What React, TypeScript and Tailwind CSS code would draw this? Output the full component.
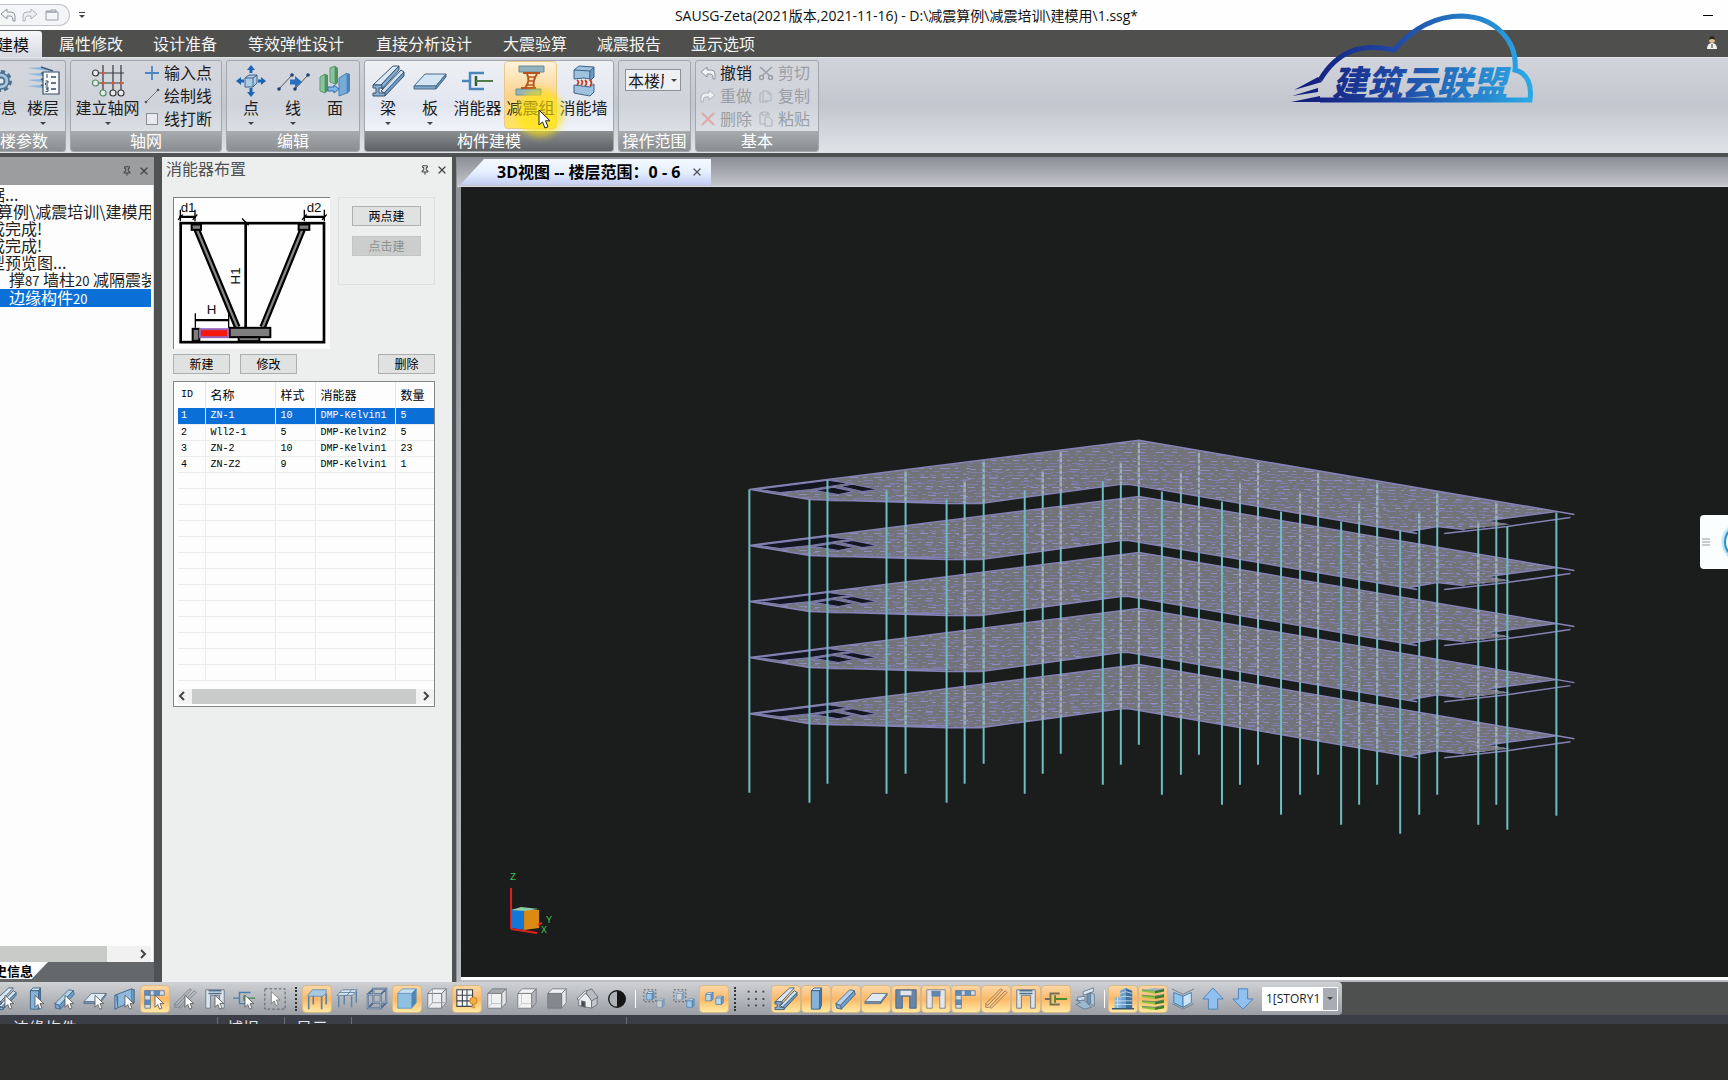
import React from 'react';
import { Pin, X } from 'lucide-react';

const BLUE = '#8fb8dc';
const EDGE = '#3f6484';

/* ---------- Ribbon icons, 32 x 32 ---------- */

const bigIcons: Record<string, React.ReactNode> = {
  gear: (
    <g fill="none" stroke="#4d7391">
      <circle cx="16" cy="16" r="9" strokeWidth="4" strokeDasharray="4 3" />
      <circle cx="16" cy="16" r="8" fill="#a9c7df" strokeWidth="1.5" />
      <circle cx="16" cy="16" r="3.5" fill="#e4e7ec" strokeWidth="2" />
    </g>
  ),
  floors: (
    <g>
      {[3, 9, 15, 21].map((y) => (
        <g key={y}>
          <path d={`M0 ${y}L14 ${y - 1}L26 ${y + 3}L14 ${y + 2}Z`} fill="#8db6dc" />
          <path d={`M14 ${y - 1}L26 ${y + 3}`} stroke="#3d5d7c" strokeWidth="1.5" />
        </g>
      ))}
      <path d="M16 7h16v22h-16z" fill="#f8fafc" stroke="#334c66" strokeWidth="1.2" />
      <path d="M24 12h5M24 18h5M24 24h5" stroke="#334c66" strokeWidth="1.6" />
      <path d="M20 9v4M18.500 16h2.500v2h-2.500v2h2.500M18.500 22h2.500v2h-2v0h2v2.500h-2.500" fill="none" stroke="#334c66" />
    </g>
  ),
  grid: (
    <g fill="none" stroke="#3a3a3a" strokeWidth="1.2">
      <path d="M11 0v25M21 0v25M29 0v25M5 8h27M5 18h27" />
      <circle cx="3.500" cy="8" r="3" fill="#e9ebef" />
      <circle cx="3.500" cy="18" r="3" fill="#e9ebef" stroke="#4f8a5c" />
      <circle cx="11" cy="28" r="3" fill="#e9ebef" stroke="#4f8a5c" />
      <circle cx="21" cy="28" r="3" fill="#e9ebef" />
      <circle cx="29" cy="28" r="3" fill="#e9ebef" />
      <g fill="#d9542b" stroke="none">
        <circle cx="11" cy="8" r="1.600" />
        <circle cx="11" cy="18" r="1.600" />
        <circle cx="21" cy="18" r="1.600" />
        <circle cx="29" cy="18" r="1.600" />
      </g>
    </g>
  ),
  point: (
    <g>
      <path d="M10 13l4-3h8v8l-4 4h-8z" fill="#a9cbe8" stroke={EDGE} />
      <path d="M10 13h8v9M18 13l4-3" fill="none" stroke={EDGE} />
      <g fill="#1f64b4">
        <path d="M16 0l4 5h-2.500v3h-3V5H12zM16 32l4-5h-2.500v-4h-3v4H12zM1 16l5-4v2.500h3v3H6V20zM31 16l-5-4v2.500h-3v3h3V20z" />
      </g>
    </g>
  ),
  line: (
    <g>
      <path d="M2 24L15 10M18 24L31 10" stroke="#555" fill="none" />
      <path d="M13 14.500h5V11l7 6-7 6v-3.500h-5z" fill="#2a6ec0" />
      <g fill="#1d3f78">
        <circle cx="2" cy="24" r="1.800" />
        <circle cx="15" cy="10" r="1.800" />
        <circle cx="18" cy="24" r="1.800" />
        <circle cx="31" cy="10" r="1.800" />
      </g>
    </g>
  ),
  face: (
    <g>
      <path d="M1 12l5-3v19l-5-2z" fill="#8ac49a" stroke="#5c9c70" />
      <path d="M6 9l3 1v16l-3 2z" fill="#4f9163" />
      <path d="M11 3l5-2v18l-5-2z" fill="#8ac49a" stroke="#5c9c70" />
      <path d="M16 1l3 2v15l-3 2z" fill="#4f9163" />
      <path d="M20 13l8-5v20l-8 3z" fill="#78abd8" stroke="#4a81b4" />
      <path d="M28 8l3 1v17l-3 3z" fill="#4c82b8" />
      <path d="M9 22h6v-2l5 4-5 4v-2H9z" fill="#7db8ea" stroke="#2f6ea8" />
    </g>
  ),
  beam: (
    <g stroke="#37536e" strokeWidth="1">
      <path d="M1 20L21 1h6L9 20z" fill="#dbe8f5" />
      <path d="M9 20L27 1v4L10 24z" fill="#86afd4" />
      <path d="M11 28L32 7v4L13 31z" fill="#6f9bc6" />
      <path d="M9 26L29 5l3 2-20 21z" fill="#cfe0f0" />
      <path d="M1 20h9v3H7v5h6v3H1v-3h3v-5H1z" fill="#8ab0d4" />
    </g>
  ),
  slab: (
    <g stroke="#4c6a86">
      <path d="M0 21L11 9h21L22 21z" fill="#d3e4f4" />
      <path d="M0 21h22v3H0z" fill="#7fa9cf" />
      <path d="M22 21L32 9v3L22 24z" fill="#5f8ebb" />
    </g>
  ),
  damper: (
    <g fill="none">
      <path d="M0 16h8M22 8H8v16h14" stroke="#4a86bd" strokeWidth="2.500" />
      <path d="M14 11v10" stroke="#355c38" strokeWidth="2.500" />
      <path d="M14 16h17" stroke="#4f7d4a" strokeWidth="2" />
    </g>
  ),
  damperSet: (
    <g>
      <path d="M4 1h25v6H4zM1 24h25v6H1z" fill="#93b2bf" stroke="#6d8c92" />
      <path d="M8 8h17M6 23h15M12 9c3 5 1 10-2 14M22 9c-3 4-4 9-3 14" fill="none" stroke="#b5541f" strokeWidth="2" />
      <path d="M13 12h8M13 16h6M12 20h7" stroke="#b5591f" strokeWidth="1.500" />
    </g>
  ),
  wall: (
    <g>
      <path d="M6 5l5-4 15 1-4 4v8l-6-1-10 1z" fill="#9fc2e0" stroke={EDGE} />
      <path d="M22 6l4-4v10l-4 4zM6 5l16 1" fill="#6d9ac4" stroke={EDGE} />
      <path d="M6 20l16 2 4-3v8l-4 4-16-3z" fill="#9fc2e0" stroke={EDGE} />
      <path d="M9 15q3 2 0 5M13 15q3 2 0 5M17 15q3 3 0 6M22 15q3 3 0 6" stroke="#c63a24" strokeWidth="1.800" fill="none" />
    </g>
  ),
};

function BigIcon({ name }: { name: string }) {
  return (
    <svg viewBox="0 0 32 32" className="size-8 shrink-0 overflow-visible" aria-hidden="true">
      {bigIcons[name]}
    </svg>
  );
}

/* ---------- Small ribbon icons, 16 x 16 ---------- */

const smallIcons: Record<string, React.ReactNode> = {
  plus: <path d="M8 1v14M1 8h14" stroke="#4a86c4" strokeWidth="1.800" />,
  diag: (
    <g>
      <path d="M2 14L14 2" stroke="#777" />
      <circle cx="2" cy="14" r="1.300" fill="#555" />
      <circle cx="14" cy="2" r="1.300" fill="#555" />
    </g>
  ),
  undo: <path d="M7 2L1 7l6 5V9h4q2 0 2 5h2V9q0-4-4-4H7z" fill="#f3f4f6" stroke="#8d949c" />,
  redo: <path d="M9 2l6 5-6 5V9H5q-2 0-2 5H1V9q0-4 4-4h4z" fill="#eceef1" stroke="#b0b5bb" />,
  del: <path d="M2 2l12 12M14 2L2 14" stroke="#e0a8a8" strokeWidth="2" />,
  cut: (
    <g fill="none" stroke="#9a9fa6" strokeWidth="1.500">
      <path d="M2 2l10 9M14 2L4 11" />
      <circle cx="3.500" cy="12.500" r="2" />
      <circle cx="12.500" cy="12.500" r="2" />
    </g>
  ),
  copy: <path d="M5 3h5l3 3v7H5zM10 3v3h3M4 5H2v9h7v-1" fill="none" stroke="#adb2b8" />,
  paste: <path d="M4 2H2v11h5M9 2h2v3M4 1h5v3H4zM7 6h4l3 3v6H7z" fill="none" stroke="#adb2b8" />,
  folder: <path d="M2 4h5v-1h5v2H2zM2 5h12v8H2z" fill="none" stroke="#999fa8" />,
};

function SmallIcon({ name }: { name: string }) {
  return (
    <svg viewBox="0 0 16 16" className="size-4 shrink-0" aria-hidden="true">
      {smallIcons[name]}
    </svg>
  );
}

/* ---------- Toolbar icons, 26 x 26 ---------- */

const pointer = <path d="M13 9v13l3-3 2 5 2.500-1-2-5h4z" fill="#fff" stroke="#555" strokeWidth="0.900" />;

const tBeam = (
  <g stroke="#37536e" strokeWidth="0.900">
    <path d="M1 16L17 1h5L8 16z" fill="#dbe8f4" />
    <path d="M9 21L25 6v3L11 24z" fill="#6f9bc6" />
    <path d="M7 20L22 4l3 2L9 22z" fill="#d6e4f1" />
    <path d="M1 16h8v2.500H6.500V22H11v2.500H1V22h2.500v-3.500H1z" fill="#8ab0d4" />
  </g>
);
const tColumn = (
  <g stroke="#3f6484">
    <path d="M8 4l3-3h8l-2 3z" fill="#cfe1f1" />
    <path d="M8 4h9v20H8z" fill="#86b3db" />
    <path d="M17 4l2-3v19l-2 4z" fill="#4d7fae" />
  </g>
);
const tBrace = (
  <g stroke="#3f6484" strokeWidth="0.900">
    <path d="M2 18L17 3l5 1L7 20z" fill="#b3d2ec" />
    <path d="M7 20L22 4l1 4L8 24z" fill="#6e9fcb" />
    <path d="M2 18l5 2 1 4-5-1z" fill="#7ba6cd" />
  </g>
);
const tSlab = (
  <g stroke="#5a6e82" strokeWidth="0.900">
    <path d="M1 16L9 7h16l-7 9z" fill="#dfe9f3" />
    <path d="M1 16h17v2H1zM18 16l7-9v2l-7 9z" fill="#7b9cba" />
  </g>
);
const tGrayBeam = (
  <g fill="none" stroke="#96785a" strokeWidth="1">
    <path d="M2 18L18 2l2 1L4 20zM6 22L23 4l2 2L8 23zM2 18v4h3" />
  </g>
);
const tPortal = (
  <g>
    <path d="M3 3h20v20h-5V9H8v14H3z" fill="#dde3e9" stroke="#68798a" />
    <path d="M6 4h14M6 7h14" stroke="#4d6f90" strokeWidth="1.500" />
  </g>
);
const tCorner = (
  <g stroke="#6d8296">
    <path d="M2 4h21v5H8v14H2z" fill="#d5dde5" />
    <path d="M2 4h6v5H2zM12 4h6v5h-6zM2 14h6v5H2z" fill="#5b8cc0" />
  </g>
);
const tCube = (front: string, top: string, side: string, stroke = '#777c83') => (
  <g stroke={stroke} strokeLinejoin="round">
    <path d="M3 7l5-5h15l-5 5z" fill={top} />
    <path d="M18 7l5-5v15l-5 6z" fill={side} />
    <path d="M3 7h15v16H3z" fill={front} />
  </g>
);
const miniCube = (x: number, y: number, fill: string) => (
  <g stroke="#4f7fab" strokeWidth="0.800">
    <path d={`M${x} ${y + 2}l2-2h6l-2 2z`} fill="#e8f2fa" />
    <path d={`M${x} ${y + 2}h6v7h-6z`} fill={fill} />
    <path d={`M${x + 6} ${y + 2}l2-2v7l-2 2z`} fill="#6c9bc8" />
  </g>
);

const toolIcons: Record<string, React.ReactNode> = {
  sBeam: <g>{tBeam}{pointer}</g>,
  sColumn: <g>{tColumn}{pointer}</g>,
  sBrace: <g>{tBrace}{pointer}</g>,
  sSlab: <g>{tSlab}{pointer}</g>,
  sWall: (
    <g>
      <path d="M2 9L20 2v14L2 24z" fill={BLUE} stroke={EDGE} />
      <path d="M20 2l3 1v14l-3-1M2 9l3 1v12" fill="#6d9ac4" stroke={EDGE} />
      {pointer}
    </g>
  ),
  sCorner: <g>{tCorner}{pointer}</g>,
  sLine: (
    <g>
      <path d="M2 18L18 2l2 1L4 20zM6 22L23 4l2 2L8 23zM2 18v4h3" fill="none" stroke="#7b828b" />
      {pointer}
    </g>
  ),
  sPortal: <g>{tPortal}{pointer}</g>,
  sDamper: (
    <g>
      <path d="M0 12h7M19 6H7v12h12" fill="none" stroke="#4780b3" strokeWidth="1.500" />
      <path d="M12 9v6M12 12h12" stroke="#3c8a4a" strokeWidth="1.500" />
      {pointer}
    </g>
  ),
  sArea: (
    <g>
      <path d="M2 2h22v22H2z" fill="none" stroke="#555b66" strokeDasharray="3 2" />
      <path d="M9 5v13l3-3 2 5 2.500-1-2-5h4z" fill="#fff" stroke="#777" strokeWidth="0.900" />
    </g>
  ),
  table: (
    <g>
      <path d="M3 9l5-6h15v4l-4 3H3z" fill="#a9c9e3" stroke="#6b93b4" />
      <path d="M4 10v14M9 10v9M18 10v14M23 7v12" stroke="#5d83a5" strokeWidth="1.800" />
    </g>
  ),
  frame: (
    <g fill="none" stroke="#5d83a5">
      <path d="M2 9l6-6h16l-5 6zM5 6h16M13 9l5-6" fill="#dce6ef" />
      <path d="M4 10v12M10 9v10M18 10v12M23 5v12" strokeWidth="1.600" />
    </g>
  ),
  wire: (
    <g fill="none" stroke="#526e8e">
      <path d="M3 8h14v15H3zM9 2h14v15H9zM3 8l6-6M17 8l6-6M3 23l6-6M17 23l6-6" strokeWidth="2.200" />
      <path d="M3 8h14v15H3zM9 2h14v15H9z" stroke="#c8d5e2" strokeWidth="0.600" />
    </g>
  ),
  solid: tCube('#8ec0e2', '#c5e0f2', '#4d83b3', '#6a9ac0'),
  hollow: (
    <g>
      {tCube('#eceef0', '#f4f5f6', '#dfe1e4')}
      <path d="M8 2v15h15M3 23l5-6" fill="none" stroke="#9a9ea4" />
    </g>
  ),
  gridBulb: (
    <g>
      <path d="M2 3h17v18H2zM8 3v18M13 3v18M2 9h17M2 15h17" fill="#f5f5f5" stroke="#3f4650" strokeWidth="1.200" />
      <circle cx="20" cy="15" r="4" fill="#f2ad3c" stroke="#c98420" />
      <path d="M18 20h4v3h-4z" fill="#d9a04a" />
    </g>
  ),
  cubeTop: (
    <g>
      {tCube('#f0f1f2', '#a7a9ad', '#e4e5e7')}
      <path d="M7 7v11h11M3 23l4-5" fill="none" stroke="#b9bcc1" />
    </g>
  ),
  cubeSide: (
    <g>
      {tCube('#f4f4f5', '#f4f4f5', '#b1b4b8')}
      <path d="M7 7v11h11M3 23l4-5" fill="none" stroke="#c5c8cc" />
    </g>
  ),
  cubeFront: tCube('#85888d', '#f1f2f3', '#e6e7e9'),
  house: (
    <g stroke="#6b7077" strokeLinejoin="round">
      <path d="M4 13l7-7 7 8v9L4 20z" fill="#eceef0" />
      <path d="M18 14l6-3v8l-6 4z" fill="#c5c8cd" />
      <path d="M11 5l7-3 7 9-7 4z" fill="#b9bdc3" />
      <path d="M2 13l9-9 2 1-9 9z" fill="#f1f2f3" />
      <path d="M7 15l4 1v6l-4-1z" fill="#474b52" />
    </g>
  ),
  contrast: (
    <g>
      <circle cx="13" cy="13" r="9" fill="#aeb1b6" stroke="#1d1d1d" strokeWidth="1.500" />
      <path d="M13 4a9 9 0 0 1 0 18z" fill="#151515" />
    </g>
  ),
  selA: (
    <g>
      <path d="M2 3h13v13H2z" fill="none" stroke="#555" strokeDasharray="2 2" />
      {miniCube(5, 5, '#9cc6ea')}
      <g opacity="0.6">{miniCube(16, 13, '#dfe2e6')}</g>
    </g>
  ),
  selB: (
    <g>
      <path d="M2 3h13v13H2z" fill="none" stroke="#555" strokeDasharray="2 2" />
      <g opacity="0.6">{miniCube(5, 5, '#dfe2e6')}</g>
      {miniCube(16, 13, '#9cc6ea')}
    </g>
  ),
  selC: <g>{miniCube(4, 6, '#b9d8ef')}{miniCube(15, 10, '#b9d8ef')}</g>,
  dots: (
    <g fill="#3e434b">
      {[5, 13, 21].map((x) => [5, 13, 20].map((y) => <rect key={`${x}-${y}`} x={x - 1} y={y - 1} width="2" height="2" />))}
    </g>
  ),
  beam: tBeam,
  column: tColumn,
  brace: tBrace,
  slab: tSlab,
  portalBlue: (
    <g>
      <path d="M2 3h22v20h-7V10H9v13H2z" fill="#6787a8" stroke="#4b6582" />
      <path d="M7 4h12v5H7z" fill="#e3e6ea" />
    </g>
  ),
  portalTop: (
    <g>
      <path d="M3 3h20v20h-6V10H9v13H3z" fill="#e4e6e9" stroke="#82878e" />
      <path d="M8 4h10v6H8z" fill="#6287ad" />
    </g>
  ),
  corner: tCorner,
  grayBeam: tGrayBeam,
  portal: tPortal,
  damper: (
    <g>
      <path d="M1 13h6M17 7H7v12h10" fill="none" stroke="#76705a" strokeWidth="2" />
      <path d="M12 9v8M12 13h13" stroke="#4a8a30" strokeWidth="2" />
    </g>
  ),
  iso: (
    <g stroke="#5b7690" strokeWidth="0.900">
      <path d="M10 5l11-4v4l-11 4z" fill="#dfe6ed" />
      <path d="M14 8l4-2v12l-4 2z" fill="#6f94b6" />
      <path d="M18 6l4 2v13l-4-3z" fill="#b5cadd" />
      <path d="M2 14h9l8 8-8 2-9-5 5-2z" fill="#9db8d1" />
      <path d="M4 11l8-1v4l-8 1z" fill="#cfdce8" />
    </g>
  ),
  building: (
    <g>
      <path d="M10 4l6-3v22h-6z" fill="#6ba0cf" />
      <path d="M16 1l7 3v19h-7z" fill="#3f6f9f" />
      <path d="M4 11h7v12H4z" fill="#86b5dd" />
      <path d="M10 7l6-2 7 2M10 11l6-1 7 1M10 15h13M10 19h13M4 15h6M4 19h6M7 11v12" fill="none" stroke="#cfe3f3" strokeWidth="0.900" />
      <path d="M1 23.500h24" stroke="#35597c" strokeWidth="1.500" />
    </g>
  ),
  storeys: (
    <g>
      {[3, 9, 15, 21].map((y) => (
        <g key={y}>
          <path d={`M1 ${y}l14 1v3l-14-2z`} fill="#8cc63f" />
          <path d={`M15 ${y + 1}l10-2v3l-10 2z`} fill="#3c7a2c" />
          <path d={`M1 ${y}l14 1 10-2`} fill="none" stroke="#5d7f6c" strokeWidth="0.900" />
        </g>
      ))}
      <path d="M1 3l14-2 10 1-10 2z" fill="#9db6c6" />
    </g>
  ),
  planes: (
    <g>
      <path d="M1 2l12 6 12-6M1 18l12 6 12-6" fill="none" stroke="#777e86" />
      <path d="M3 6l10 4v12L3 17z" fill="#8fc4ec" stroke="#3b7cb4" />
      <path d="M13 10l9-4v11l-9 5z" fill="#cfe5f6" stroke="#3b7cb4" />
    </g>
  ),
  up: <path d="M13 1L24 13h-6v11H8V13H2z" fill="#8fc0f0" stroke="#4a7fb8" />,
  down: <path d="M13 24L2 13h6V2h10v11h6z" fill="#8fc0f0" stroke="#4a7fb8" />,
};

function Tool({ name, active = false }: { name: string; active?: boolean }) {
  return (
    <button
      type="button"
      aria-label={name}
      aria-pressed={active}
      className={
        active
          ? 'flex h-7 w-[30px] shrink-0 items-center justify-center rounded-sm border border-[#d9b98a] bg-linear-to-b from-[#fbd7a5] via-[#fbb968] to-[#ffe9a0]'
          : 'flex h-7 w-[30px] shrink-0 items-center justify-center'
      }
    >
      <svg viewBox="0 0 26 26" className="size-6 shrink-0 overflow-visible" aria-hidden="true">
        {toolIcons[name]}
      </svg>
    </button>
  );
}

const Grip = () => (
  <span className="flex w-3 shrink-0 justify-center">
    <span className="h-6 border-l-2 border-dotted border-[#2f3237]" />
  </span>
);

/* ---------- Ribbon parts ---------- */

function Group({ title, hot = false, className, titleClass = 'text-center', children }: { title: string; hot?: boolean; className: string; titleClass?: string; children: React.ReactNode }) {
  return (
    <section
      className={`flex h-[92px] shrink-0 flex-col overflow-hidden rounded-[3px] border border-[#a3a6aa] ${
        hot
          ? 'bg-linear-to-b from-[#eef0f4] via-[#e2e6f0] to-[#fbfdff]'
          : 'bg-linear-to-b from-[#d4d6dc] via-[#cfd3db] to-[#e6ebec]'
      } ${className}`}
    >
      <div className="flex flex-1 items-start">{children}</div>
      <h2
        className={`h-5 text-base leading-[19px] whitespace-nowrap text-white ${titleClass} ${
          hot ? 'bg-linear-to-b from-[#8d9093] to-[#5e6264]' : 'bg-linear-to-b from-[#a9acaf] to-[#8b8e91]'
        }`}
      >
        {title}
      </h2>
    </section>
  );
}

const Caret = ({ className = '' }: { className?: string }) => (
  <span className={`border-x-[3px] border-t-[3px] border-x-transparent border-t-[#444] ${className}`} />
);

function Big({ icon, label, caret = false, className, hot = false }: { icon: string; label: string; caret?: boolean; className: string; hot?: boolean }) {
  return (
    <button
      type="button"
      className={`flex h-[68px] shrink-0 flex-col items-center pt-[3px] text-base leading-[21px] whitespace-nowrap text-[#1d1d1d] ${
        hot ? 'rounded-sm border border-[#e7c98b] bg-linear-to-b from-[#fdf3dc] via-[#fbd28b] to-[#ffe45e]' : 'border border-transparent'
      } ${className}`}
    >
      <BigIcon name={icon} />
      <span>{label}</span>
      {caret && <Caret className="mt-1" />}
    </button>
  );
}

function Small({ icon, label, off = false }: { icon: string; label: string; off?: boolean }) {
  return (
    <button
      type="button"
      disabled={off}
      className={`flex h-[23px] items-center gap-1 text-base leading-[23px] whitespace-nowrap ${off ? 'text-[#9a9da3]' : 'text-[#1d1d1d]'}`}
    >
      <SmallIcon name={icon} />
      {label}
    </button>
  );
}

function Ribbon() {
  return (
    <div className="flex items-start gap-1 border-t border-[#e4e5ea] bg-linear-to-b from-[#d2d4db] via-[#c2c6ce] to-[#e0e4e8] pt-0.5 pb-px">
      <Group title="楼参数" titleClass="text-left" className="w-[66px] rounded-l-none border-l-0">
        <Big icon="gear" label="信息" className="-ml-[17px] w-9" />
        <Big icon="floors" label="楼层" caret className="ml-1.5 w-9" />
      </Group>
      <Group title="轴网" className="w-[152px]">
        <Big icon="grid" label="建立轴网" caret className="w-[73px]" />
        <div className="flex flex-col">
          <Small icon="plus" label="输入点" />
          <Small icon="diag" label="绘制线" />
          <label className="flex h-[23px] items-center gap-1 text-base leading-[23px] whitespace-nowrap text-[#1d1d1d]">
            <input type="checkbox" className="m-0.5 size-3 appearance-none border border-[#8b8f96] bg-[#e9eaee]" />
            线打断
          </label>
        </div>
      </Group>
      <Group title="编辑" className="w-[134px]">
        <Big icon="point" label="点" caret className="ml-[3px] w-[42px]" />
        <Big icon="line" label="线" caret className="w-[42px]" />
        <Big icon="face" label="面" className="w-[42px]" />
      </Group>
      <Group title="构件建模" hot className="w-[250px]">
        <Big icon="beam" label="梁" caret className="ml-0.5 w-[42px]" />
        <Big icon="slab" label="板" caret className="w-[42px]" />
        <Big icon="damper" label="消能器" className="w-[53px]" />
        <div className="relative">
          <Big icon="damperSet" label="减震组" hot className="w-[53px]" />
          <span className="absolute top-7 left-3 size-12 rounded-full bg-[#ffe600] opacity-60 blur-[3px]" />
          <svg viewBox="0 0 14 20" className="absolute top-12 left-[34px] z-10 h-5 w-3.5" aria-hidden="true">
            <path d="M1 1v15l3.500-3 2.500 6 3-1.200-2.500-6H12z" fill="#fff" stroke="#222" />
          </svg>
        </div>
        <Big icon="wall" label="消能墙" className="w-[53px]" />
      </Group>
      <Group title="操作范围" className="w-[73px]">
        <span className="relative mt-2 ml-1.5 flex items-center">
          <select
            aria-label="操作范围"
            className="h-[22px] w-14 appearance-none border border-[#8f9399] bg-[#eef0f3] pr-4 pl-0.5 text-base leading-5 text-[#1d1d1d]"
          >
            <option>本楼层</option>
          </select>
          <Caret className="pointer-events-none absolute right-1" />
        </span>
      </Group>
      <Group title="基本" className="w-[124px]">
        <div className="flex gap-1.5 pl-1">
          <div className="flex flex-col">
            <Small icon="undo" label="撤销" />
            <Small icon="redo" label="重做" off />
            <Small icon="del" label="删除" off />
          </div>
          <div className="flex flex-col">
            <Small icon="cut" label="剪切" off />
            <Small icon="copy" label="复制" off />
            <Small icon="paste" label="粘贴" off />
          </div>
        </div>
      </Group>
    </div>
  );
}

/* ---------- Title, logo and tabs ---------- */

function CloudLogo() {
  return (
    <svg viewBox="1290 12 244 94" className="absolute top-3 right-[194px] z-20 h-[94px] w-[244px]" role="img" aria-label="建筑云联盟">
      <defs>
        <linearGradient id="cloud" gradientUnits="userSpaceOnUse" x1="1310" y1="0" x2="1530" y2="0">
          <stop offset="0" stopColor="#14207e" />
          <stop offset="0.400" stopColor="#1f4ba6" />
          <stop offset="1" stopColor="#2ba9e6" />
        </linearGradient>
      </defs>
      <path
        d="M1320 80C1338 50 1362 43 1394 50C1420 20 1446 16 1462 16C1496 17 1518 42 1515 70C1528 73 1532 86 1530 100H1320"
        fill="none"
        stroke="url(#cloud)"
        strokeWidth="5"
      />
      <path d="M1294 90L1318 77L1322 82ZM1292 96L1318 88V92ZM1291 102L1320 96V102Z" fill="url(#cloud)" />
      <text x="1332" y="96" fontSize="35" fontWeight="900" fontStyle="italic" fill="url(#cloud)" className="font-['Noto_Sans_CJK_SC',sans-serif]">
        建筑云联盟
      </text>
    </svg>
  );
}

function TitleBar() {
  return (
    <header className="flex h-[30px] items-center bg-[#fdfefd]">
      <div className="flex h-[22px] w-[70px] items-center gap-1.5 rounded-r-full border border-l-0 border-[#c2c5ca] bg-[#f4f5f6]">
        <button type="button" aria-label="撤销"><SmallIcon name="undo" /></button>
        <button type="button" aria-label="重做"><SmallIcon name="redo" /></button>
        <button type="button" aria-label="打开"><SmallIcon name="folder" /></button>
      </div>
      <button type="button" aria-label="自定义" className="ml-2 flex w-2 flex-col items-center gap-0.5">
        <span className="h-px w-1.5 bg-[#444]" />
        <Caret />
      </button>
      <h1 className="flex-1 pt-0.5 pl-6 text-center font-['Open_Sans','Noto_Sans_CJK_SC',sans-serif] text-sm leading-7 text-[#111]">
        SAUSG-Zeta(2021版本,2021-11-16) - D:\减震算例\减震培训\建模用\1.ssg*
      </h1>
      <button type="button" aria-label="最小化" className="mr-[15px] flex h-6 items-center">
        <span className="h-px w-2.5 bg-black" />
      </button>
    </header>
  );
}

const tabs = ['属性修改', '设计准备', '等效弹性设计', '直接分析设计', '大震验算', '减震报告', '显示选项'];

function TabBar() {
  return (
    <nav className="flex h-[27px] items-end bg-[#4f504e] text-base leading-[27px] whitespace-nowrap text-[#f4f4f4]">
      <button type="button" className="mr-0.5 h-[26px] w-[42px] overflow-hidden rounded-tr-[3px] bg-linear-to-b from-[#f6f7fa] to-[#d6d9e0] text-left leading-[26px] text-[#111]">
        <span className="-ml-[3px]">建模</span>
      </button>
      {tabs.map((t) => (
        <button key={t} type="button" className={t.length > 4 ? 'px-4' : 'px-[15px]'}>
          {t}
        </button>
      ))}
      <svg viewBox="0 0 12 14" className="mr-2.5 mb-[7px] ml-auto h-3.5 w-3" aria-label="用户">
        <circle cx="6" cy="4" r="3" fill="#d8bf8c" />
        <path d="M3 4q0-4 3-4t3 4q-3-2-6 0z" fill="#2c2620" />
        <path d="M1 13q0-6 5-6t5 6z" fill="#f4f4f4" />
        <path d="M6 8v4" stroke="#333" />
      </svg>
    </nav>
  );
}

/* ---------- Left dock ---------- */

const PaneTools = () => (
  <span className="flex items-center gap-1.5 text-[#444]">
    <button type="button" aria-label="固定"><Pin className="size-2.5" strokeWidth={2.5} /></button>
    <button type="button" aria-label="关闭"><X className="size-3" strokeWidth={2.5} /></button>
  </span>
);

function LogPane() {
  return (
    <aside className="flex w-[154px] shrink-0 flex-col overflow-hidden bg-[#65686a]">
      <div className="flex h-7 shrink-0 items-center justify-end bg-[#9c9d9e] pr-1">
        <PaneTools />
      </div>
      <div className="flex flex-1 flex-col border-r border-[#d9dbdb] bg-[#fcfdfc] pt-px pr-0.5">
        <ul className="flex-1 overflow-hidden text-base leading-[17px] whitespace-nowrap text-[#222]">
          <li className="-ml-[11px]">据...</li>
          <li className="-ml-[3px]">算例\减震培训\建模用</li>
          <li className="-ml-[11px]">成完成!</li>
          <li className="-ml-[11px]">成完成!</li>
          <li className="-ml-[11px]">型预览图...</li>
          <li className="pl-[9px]">撑<span className="text-[13px]">87</span> 墙柱<span className="text-[13px]">20</span> 减隔震装</li>
          <li className="bg-[#0a6fd6] pl-[9px] text-white">边缘构件<span className="text-[13px]">20</span></li>
        </ul>
        <div className="flex h-4 items-center bg-[#f0f1f0]">
          <span className="h-full w-[107px] bg-[#c9cbc9]" />
          <span className="ml-auto pr-1">
            <svg viewBox="0 0 8 10" className="h-2.5 w-2" aria-hidden="true"><path d="M2 1l4 4-4 4" fill="none" stroke="#444" strokeWidth="2" /></svg>
          </span>
        </div>
      </div>
      <div className="flex h-5 shrink-0 items-start">
        <button type="button" className="h-[17px] w-12 overflow-hidden bg-[#fcfdfc] text-left text-[13px] leading-[17px] font-bold whitespace-nowrap text-black [clip-path:polygon(0_0,100%_0,66%_100%,0_100%)]">
          <span className="-ml-[6px]">史信息</span>
        </button>
      </div>
    </aside>
  );
}

/* ---------- Damper pane ---------- */

function DamperSketch() {
  return (
    <div className="h-[152px] w-[157px] border-t border-l border-[#7d7f7f] bg-[#fdfefd]">
      <svg viewBox="524 145 468 452" className="size-full" aria-hidden="true">
        <g fill="none" stroke="#000">
          <rect x="544" y="220" width="430" height="357" strokeWidth="8" />
          <path d="M739 216V540" strokeWidth="8" />
          <path d="M540 201H588M914 201H976M588 511H688" strokeWidth="7" />
          <path d="M543 180V214M587 180V214M915 180V214M975 180V214M588 490V534M688 488V534" strokeWidth="4" />
          <path d="M536 210l14-16M580 210l14-16M908 210l14-16M968 210l14-16M728 206l20 20M736 530l14 14" strokeWidth="4" />
        </g>
        <path d="M592 238L714 532M910 238L790 532" stroke="#000" strokeWidth="20" />
        <path d="M592 238L714 532M910 238L790 532" stroke="#858585" strokeWidth="7" />
        <g fill="#7e7e7e" stroke="#000" strokeWidth="6">
          <rect x="577" y="224" width="28" height="16" />
          <rect x="898" y="224" width="32" height="16" />
          <rect x="691" y="534" width="122" height="28" />
          <rect x="718" y="562" width="62" height="12" />
          <rect x="580" y="537" width="20" height="36" />
        </g>
        <rect x="602" y="538" width="84" height="24" fill="#f5180c" stroke="#9a63b8" strokeWidth="6" />
        <g fill="#111" fontSize="40" className="font-['Liberation_Sans',sans-serif]">
          <text x="544" y="186">d1</text>
          <text x="922" y="186">d2</text>
          <text x="622" y="494">H</text>
          <text transform="translate(722 404) rotate(-90)">H1</text>
        </g>
      </svg>
    </div>
  );
}

const rows = [
  ['1', 'ZN-1', '10', 'DMP-Kelvin1', '5'],
  ['2', 'Wll2-1', '5', 'DMP-Kelvin2', '5'],
  ['3', 'ZN-2', '10', 'DMP-Kelvin1', '23'],
  ['4', 'ZN-Z2', '9', 'DMP-Kelvin1', '1'],
];
const blankRows = Array.from({ length: 13 }, () => ['', '', '', '', '']);

const PushButton = ({ label, className, off = false }: { label: string; className: string; off?: boolean }) => (
  <button
    type="button"
    disabled={off}
    className={`h-5 border text-xs leading-[18px] ${off ? 'border-[#c4c6c5] bg-[#cccecd] text-[#8f9190]' : 'border-[#adb0af] bg-[#e0e2e1] text-black'} ${className}`}
  >
    {label}
  </button>
);

function DamperPane() {
  return (
    <aside className="flex w-[290px] shrink-0 flex-col bg-[#edefee]">
      <div className="flex h-7 items-start justify-between pr-1 pl-1">
        <h2 className="text-base leading-[22px] text-[#505254]">消能器布置</h2>
        <span className="pt-[7px]"><PaneTools /></span>
      </div>
      <div className="flex flex-col pt-3 pr-[17px] pl-[11px]">
        <div className="flex items-start gap-2">
          <DamperSketch />
          <div className="flex h-[88px] flex-1 flex-col items-center gap-2.5 border border-[#dfe1e0] pt-2">
            <PushButton label="两点建" className="w-[69px]" />
            <PushButton label="点击建" className="w-[69px]" off />
          </div>
        </div>
        <div className="mt-[5px] flex gap-2.5">
          <PushButton label="新建" className="w-[57px]" />
          <PushButton label="修改" className="w-[57px]" />
          <PushButton label="删除" className="ml-auto w-[57px]" />
        </div>
        <div className="mt-[7px] border border-[#828584] bg-[#fcfdfc] pl-1">
          <table className="w-full table-fixed border-collapse text-left">
            <colgroup>
              <col className="w-[27px]" />
              <col className="w-[70px]" />
              <col className="w-10" />
              <col className="w-20" />
              <col />
            </colgroup>
            <thead>
              <tr className="h-[26px] text-xs text-black">
                {['ID', '名称', '样式', '消能器', '数量'].map((h, i) => (
                  <th key={h} scope="col" className={`border-r border-[#e4e6e5] p-0 font-normal whitespace-nowrap last:border-r-0 ${i ? 'pl-[5px]' : "pl-[3px] font-['Liberation_Mono',monospace] text-[10px]"}`}>
                    {h}
                  </th>
                ))}
              </tr>
            </thead>
            <tbody className="font-['Liberation_Mono',monospace] text-[10px] leading-[15px]">
              {[...rows, ...blankRows].map((r, n) => (
                <tr key={n} className={n === 0 ? 'h-4 bg-[#0a6fd6] text-white' : 'h-4 text-black'}>
                  {r.map((c, i) => (
                    <td key={i} className={`border-r border-b border-[#ebedec] p-0 whitespace-nowrap last:border-r-0 ${i ? 'pl-[5px]' : 'pl-[3px]'}`}>
                      {c}
                    </td>
                  ))}
                </tr>
              ))}
            </tbody>
          </table>
          <div className="mt-2 mb-0.5 flex h-[15px] items-center bg-[#f2f3f2]">
            <svg viewBox="0 0 8 10" className="mr-1.5 h-2.5 w-2" aria-hidden="true"><path d="M6 1L2 5l4 4" fill="none" stroke="#444" strokeWidth="2" /></svg>
            <span className="h-full flex-1 bg-[#c9cbca]" />
            <svg viewBox="0 0 8 10" className="mr-1 ml-1.5 h-2.5 w-2" aria-hidden="true"><path d="M2 1l4 4-4 4" fill="none" stroke="#444" strokeWidth="2" /></svg>
          </div>
        </div>
      </div>
    </aside>
  );
}

/* ---------- 3D model ---------- */

const STOREY = 56;
const COLUMN = 303;
const backColumns = [
  [905, 470], [983, 460], [964, 480], [1060, 450], [1042, 470], [1138, 441], [1120, 461],
  [1198, 451], [1180, 471], [1239, 481], [1257, 461], [1299, 491], [1317, 471], [1358, 501],
  [1376, 481], [1418, 511], [1436, 491], [1477, 521], [1495, 501],
];
const frontColumns = [
  [749, 489], [809, 499], [827, 480], [886, 490], [946, 499], [1024, 490], [1102, 481],
  [1161, 491], [1221, 501], [1280, 511], [1340, 521], [1399, 530], [1506, 526], [1555, 512],
];
const slab =
  'M749 489L1138 440L1144 441L1555 511L1487 520L1509 524L1463 529L1436 526L1408 531L1398 530L1128 484L1120 484L980 503L946 502L809 499Z';
const openings = 'M757 489L828 480L848 483L810 489L780 492ZM840 486L852 484L877 489L862 491ZM814 490L833 487L853 491L838 494Z';

const texture = Array.from({ length: 34 }, (_, i) => i * 3);
const dashes = ['7 6 3 5', '4 7 8 4', '10 5 3 8', '3 9 6 4', '8 8 5 11'];

function Model() {
  return (
    <svg viewBox="461 187 1267 789" preserveAspectRatio="xMinYMin slice" className="absolute inset-0 size-full" aria-label="3D视图" role="img">
      <defs>
        <clipPath id="slabClip"><path d={slab} /></clipPath>
        <g id="storey">
          <path d={slab} fill="#737479" />
          <g clipPath="url(#slabClip)" fill="none" shapeRendering="crispEdges">
            {texture.map((d, i) => (
              <path
                key={d}
                d={`M740 ${440 + d}L1570 ${446 + d}`}
                stroke={i % 3 ? '#7f7db0' : '#8d8dc0'}
                strokeDasharray={dashes[(i * 3) % 5]}
                strokeDashoffset={(i * i * 7) % 31}
              />
            ))}
            {texture.map((d, i) => (
              <path
                key={d}
                d={`M740 ${490 + d * 2}L1138 ${460 + d * 2}L1570 ${506 + d * 2}`}
                stroke="#807ead"
                strokeDasharray={dashes[(i * 2) % 5]}
                strokeDashoffset={(i * i * 11) % 37}
              />
            ))}
          </g>
          <path d={openings} fill="#14151f" stroke="#7c7ab0" />
          <path
            d="M749 489L1138 440L1144 441L1573 514M749 489L809 499L946 503L980 503L1120 484L1128 484L1398 530L1416 533M827 500L946 501M1569 517L1506 526L1443 533M1408 531L1436 526L1463 529M1555 511L1487 520"
            fill="none"
            stroke="#8582b6"
            strokeWidth="1.500"
          />
        </g>
      </defs>
      {[0, 1, 2, 3, 4].map((n) => (
        <use key={n} href="#storey" y={n * STOREY} />
      ))}
      <g stroke="#6cbcc2" strokeWidth="2">
        {[...backColumns, ...frontColumns].map(([x, y]) => (
          <path key={`${x}-${y}`} d={`M${x} ${y}v${COLUMN}`} />
        ))}
      </g>
      {[0, 1, 2, 3, 4].map((n) => (
        <g key={n} transform={`translate(0 ${n * STOREY})`}>
          <g clipPath="url(#slabClip)">
            {backColumns.map(([x, y]) => {
              const top = Math.max(440, y - n * STOREY);
              return (
                <g key={x} strokeWidth="2">
                  <path d={`M${x} ${top}V540`} stroke="#9fb0b8" />
                  <path d={`M${x} ${top}V540`} stroke="#7d7d90" strokeDasharray="2 5 1 4" />
                </g>
              );
            })}
          </g>
        </g>
      ))}
      <g>
        <path d="M511 887V928" stroke="#e02020" strokeWidth="2" />
        <path d="M511 909h13v20l-13-2z" fill="#1277d8" />
        <path d="M524 909h15v18l-15 2z" fill="#dc8a12" />
        <path d="M511 909l10-3 18 2-15 2z" fill="#8fc9a6" />
        <path d="M511 928l26 4M538 924l4-2" stroke="#e02020" strokeWidth="2" />
        <g fill="#3fc452" fontSize="10" className="font-['Liberation_Mono',monospace]">
          <text x="510" y="879">Z</text>
          <text x="546" y="922">Y</text>
          <text x="541" y="932">X</text>
        </g>
      </g>
    </svg>
  );
}

function View3D() {
  return (
    <main className="flex min-w-0 flex-1 flex-col border-l border-[#8d9096] bg-linear-to-b from-[#8e9197] to-[#b9bcc2]">
      <div className="flex h-[30px] shrink-0 items-start border-b border-[#d9dbe0] bg-linear-to-b from-[#8b8e94] to-[#c3c5cb] pt-0.5 pl-[3px]">
        <div className="flex h-[26px] w-[251px] items-center bg-linear-to-b from-[#f4faff] via-[#e6efff] to-[#c3cdf2] pl-[37px] [clip-path:polygon(0_100%,24px_0,100%_0,100%_100%)]">
          <button type="button" className="font-['Open_Sans','Noto_Sans_CJK_SC',sans-serif] text-base leading-[22px] font-bold whitespace-pre text-black">3D视图 -- 楼层范围：0 - 6</button>
          <button type="button" aria-label="关闭视图" className="ml-auto pr-2 text-[#555]"><X className="size-3" strokeWidth={2.500} /></button>
        </div>
      </div>
      <div className="relative mb-0.5 ml-1 flex-1 overflow-hidden border-b-[3px] border-white bg-[#1a1d1b]">
        <Model />
      </div>
    </main>
  );
}

/* ---------- Bottom ---------- */

function BottomToolbar() {
  return (
    <div className="flex h-[33px] shrink-0 overflow-hidden bg-[#4e504f]">
      <div className="flex items-center overflow-hidden rounded-r-sm bg-linear-to-b from-[#cfd1d4] to-[#9b9ea5] pr-1">
        <span className="-ml-[10px] flex">
          {['sBeam', 'sColumn', 'sBrace', 'sSlab', 'sWall'].map((n) => <Tool key={n} name={n} />)}
          <Tool name="sCorner" active />
          {['sLine', 'sPortal', 'sDamper', 'sArea'].map((n) => <Tool key={n} name={n} />)}
        </span>
        <Grip />
        <Tool name="table" active />
        <Tool name="frame" />
        <Tool name="wire" />
        <Tool name="solid" active />
        <Tool name="hollow" />
        <Tool name="gridBulb" active />
        {['cubeTop', 'cubeSide', 'cubeFront', 'house', 'contrast'].map((n) => <Tool key={n} name={n} />)}
        <span className="mx-[3px] h-[18px] w-px shrink-0 bg-white" />
        <Tool name="selA" />
        <Tool name="selB" />
        <Tool name="selC" active />
        <Grip />
        <Tool name="dots" />
        {['beam', 'column', 'brace', 'slab', 'portalBlue', 'portalTop', 'corner', 'grayBeam', 'portal', 'damper'].map((n) => (
          <Tool key={n} name={n} active />
        ))}
        <Tool name="iso" />
        <span className="mx-[3px] h-[18px] w-px shrink-0 bg-white" />
        <Tool name="building" active />
        <Tool name="storeys" active />
        {['planes', 'up', 'down'].map((n) => <Tool key={n} name={n} />)}
        <span className="relative ml-1 flex items-center">
          <select
            aria-label="楼层"
            className="h-6 w-[76px] appearance-none border border-white bg-white pr-[15px] pl-[3px] font-['Open_Sans',sans-serif] text-xs leading-5 text-[#1d1d1d]"
          >
            <option>1[STORY1</option>
          </select>
          <span className="pointer-events-none absolute right-px flex h-[22px] w-3.5 items-center justify-center bg-[#a9acb3]">
            <Caret />
          </span>
        </span>
      </div>
    </div>
  );
}

function StatusBar() {
  return (
    <footer className="flex h-[9px] shrink-0 overflow-hidden bg-[#3b3d47] pt-0.5 text-base leading-5 whitespace-nowrap text-[#e4e4e6]">
      <span className="w-[218px] border-r border-[#6c6e76] pl-[13px]">边缘构件</span>
      <span className="w-[67px] border-r border-[#6c6e76] pl-[9px]">捕捉</span>
      <span className="w-[67px] border-r border-[#6c6e76] pl-[11px]">显示</span>
      <span className="w-[275px] border-r border-[#6c6e76]" />
    </footer>
  );
}

export default function App() {
  return (
    <div className="relative flex min-h-screen flex-col overflow-hidden bg-[#2d2d2b] font-['Noto_Sans_CJK_SC',sans-serif]">
      <TitleBar />
      <CloudLogo />
      <TabBar />
      <Ribbon />
      <div className="flex flex-1 bg-[#4f5153] pt-1">
        <LogPane />
        <div className="w-2 shrink-0" />
        <DamperPane />
        <div className="w-1 shrink-0" />
        <View3D />
      </div>
      <BottomToolbar />
      <StatusBar />
      <div className="h-14 shrink-0" />
      <button
        type="button"
        aria-label="展开"
        className="absolute top-[515px] right-0 flex h-[54px] w-7 items-center overflow-hidden rounded-l-sm bg-[#fbfefe] pl-0.5"
      >
        <svg viewBox="0 0 26 54" className="h-[54px] w-[26px]" aria-hidden="true">
          <path d="M0 24h8M0 27h8M0 30h8" stroke="#999" />
          <circle cx="40" cy="27" r="19" fill="none" stroke="#bfe6f4" strokeWidth="3" />
          <circle cx="40" cy="27" r="17" fill="none" stroke="#2f8dc4" strokeWidth="2" />
        </svg>
      </button>
    </div>
  );
}
